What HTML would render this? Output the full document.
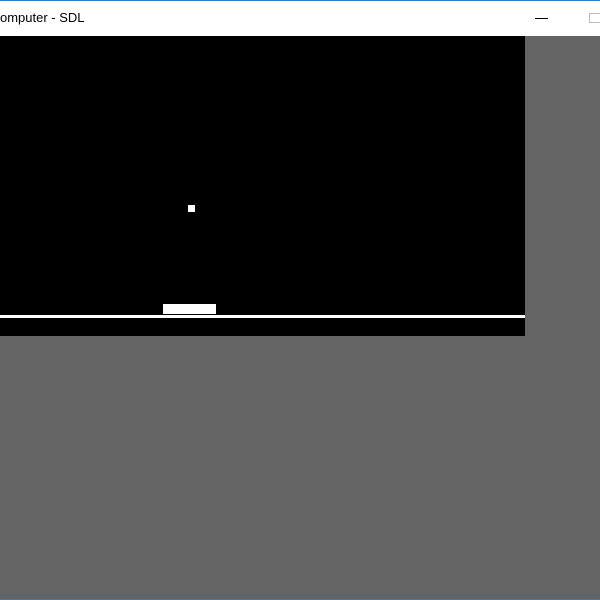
<!DOCTYPE html>
<html><head><style>
html,body{margin:0;padding:0;width:600px;height:600px;overflow:hidden;background:#646464;position:relative}
div{position:absolute}
</style></head><body>
<div style="left:0;top:0;width:600px;height:1px;background:#2b7fd0"></div>
<div style="left:0;top:1px;width:600px;height:35px;background:#fff"></div>
<div style="left:0;top:10px;font:13px 'Liberation Sans',sans-serif;color:#000;white-space:nowrap">omputer - SDL</div>
<div style="left:535px;top:18px;width:13px;height:1px;background:#000"></div>
<div style="left:589px;top:13px;width:11px;height:10px;border:1px solid #bbb;box-sizing:border-box;border-right:none"></div>
<div style="left:0;top:36px;width:525px;height:300px;background:#000"></div>
<div style="left:188px;top:205px;width:7px;height:7px;background:#fff"></div>
<div style="left:163px;top:304px;width:53px;height:10px;background:#fff"></div>
<div style="left:0;top:315px;width:525px;height:3px;background:#fff"></div>
<div style="left:0;top:599px;width:600px;height:1px;background:#2b7fd0"></div>
</body></html>
